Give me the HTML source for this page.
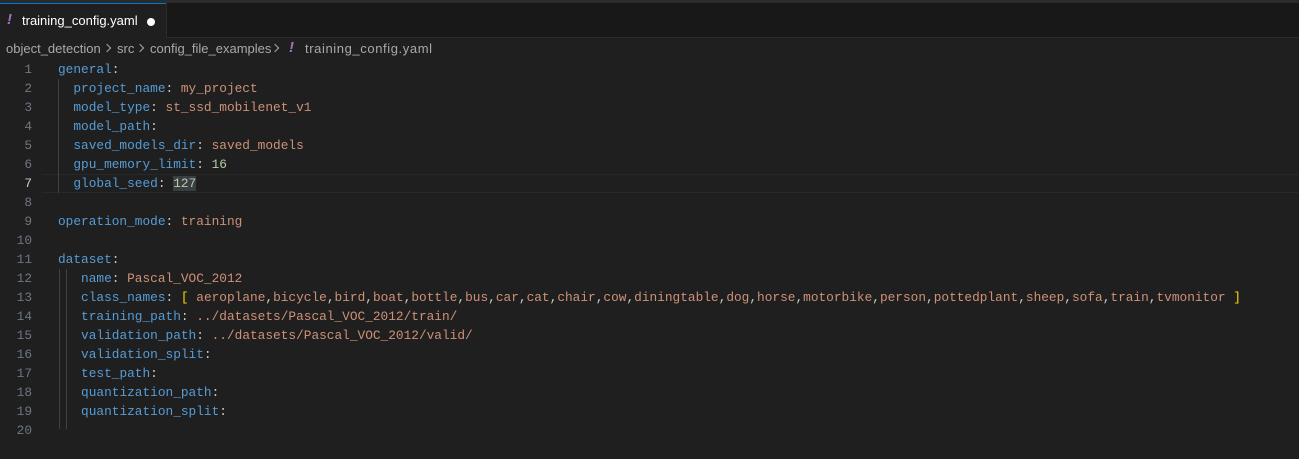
<!DOCTYPE html>
<html><head><style>
html,body{margin:0;padding:0;width:1299px;height:429px;overflow:hidden;background:#1f1f1f;}
.top{position:absolute;left:0;top:0;width:1299px;height:3px;background:#2b2b2b;}
.tabbar{position:absolute;left:0;top:3px;width:1299px;height:34px;background:#181818;border-bottom:1px solid #2b2b2b;}
.tab{position:absolute;left:0;top:3px;width:166px;height:35px;background:#1f1f1f;border-right:1px solid #2b2b2b;font:13px "Liberation Sans",sans-serif;color:#fff;}
.tab .bar{position:absolute;left:0;top:0;width:166px;height:1px;background:#0078d4;}
.tab .ex{position:absolute;left:7px;top:8px;color:#a074c4;font-style:italic;font-weight:bold;font-size:15px;}
.tab .nm{position:absolute;left:22px;top:10px;}
.tab .dot{position:absolute;left:147px;top:15px;width:8px;height:8px;border-radius:50%;background:#fff;}
.cr{position:absolute;top:41px;font:13px "Liberation Sans",sans-serif;color:#a9a9a9;white-space:pre;}
.chev{position:absolute;top:45px;width:5px;height:5px;border-top:1px solid #a9a9a9;border-right:1px solid #a9a9a9;transform:rotate(45deg);}
.code{position:absolute;left:0;top:60px;font:12.8px "Liberation Mono",monospace;line-height:19px;white-space:pre;}
.ln{position:absolute;left:0;width:32px;text-align:right;color:#6e7681;}
.tx{position:absolute;left:58px;}
.k{color:#569cd6}.s{color:#ce9178}.n{color:#b5cea8}.p{color:#cccccc}.y{color:#ffd700}
.cur{position:absolute;left:42px;top:174px;width:1257px;height:17px;border-top:1px solid #282828;border-bottom:1px solid #282828;}
.guide{position:absolute;width:1px;background:#404040;}
.sel{background:#3a3d41;}
</style></head><body>
<div class="top"></div>
<div class="tabbar"></div>
<div class="tab"><div class="bar"></div><span class="ex">!</span><span class="nm">training_config.yaml</span><div class="dot"></div></div>
<div class="cr" style="left:6px">object_detection</div>
<div class="chev" style="left:104px"></div>
<div class="cr" style="left:117px">src</div>
<div class="chev" style="left:137px"></div>
<div class="cr" style="left:150px">config_file_examples</div>
<div class="chev" style="left:272px"></div>
<div class="cr" style="left:289px;color:#a074c4;font-weight:bold;font-style:italic;font-size:15px;top:39px">!</div>
<div class="cr" style="left:305px;letter-spacing:0.6px">training_config.yaml</div>
<div class="cur"></div>
<div class="guide" style="left:58px;top:79px;height:114px"></div>
<div class="guide" style="left:59px;top:269px;height:160px"></div>
<div class="guide" style="left:66px;top:269px;height:160px"></div>
<div class="code">
<div class="ln" style="top:0">1</div><div class="tx" style="top:0"><span class="k">general</span><span class="p">:</span></div>
<div class="ln" style="top:19px">2</div><div class="tx" style="top:19px">  <span class="k">project_name</span><span class="p">: </span><span class="s">my_project</span></div>
<div class="ln" style="top:38px">3</div><div class="tx" style="top:38px">  <span class="k">model_type</span><span class="p">: </span><span class="s">st_ssd_mobilenet_v1</span></div>
<div class="ln" style="top:57px">4</div><div class="tx" style="top:57px">  <span class="k">model_path</span><span class="p">:</span></div>
<div class="ln" style="top:76px">5</div><div class="tx" style="top:76px">  <span class="k">saved_models_dir</span><span class="p">: </span><span class="s">saved_models</span></div>
<div class="ln" style="top:95px">6</div><div class="tx" style="top:95px">  <span class="k">gpu_memory_limit</span><span class="p">: </span><span class="n">16</span></div>
<div class="ln" style="top:114px;color:#ccc">7</div><div class="tx" style="top:114px">  <span class="k">global_seed</span><span class="p">: </span><span class="n sel">127</span></div>
<div class="ln" style="top:133px">8</div>
<div class="ln" style="top:152px">9</div><div class="tx" style="top:152px"><span class="k">operation_mode</span><span class="p">: </span><span class="s">training</span></div>
<div class="ln" style="top:171px">10</div>
<div class="ln" style="top:190px">11</div><div class="tx" style="top:190px"><span class="k">dataset</span><span class="p">:</span></div>
<div class="ln" style="top:209px">12</div><div class="tx" style="top:209px">   <span class="k">name</span><span class="p">: </span><span class="s">Pascal_VOC_2012</span></div>
<div class="ln" style="top:228px">13</div><div class="tx" style="top:228px">   <span class="k">class_names</span><span class="p">: </span><span class="y">[</span> <span class="s">aeroplane</span><span class="p">,</span><span class="s">bicycle</span><span class="p">,</span><span class="s">bird</span><span class="p">,</span><span class="s">boat</span><span class="p">,</span><span class="s">bottle</span><span class="p">,</span><span class="s">bus</span><span class="p">,</span><span class="s">car</span><span class="p">,</span><span class="s">cat</span><span class="p">,</span><span class="s">chair</span><span class="p">,</span><span class="s">cow</span><span class="p">,</span><span class="s">diningtable</span><span class="p">,</span><span class="s">dog</span><span class="p">,</span><span class="s">horse</span><span class="p">,</span><span class="s">motorbike</span><span class="p">,</span><span class="s">person</span><span class="p">,</span><span class="s">pottedplant</span><span class="p">,</span><span class="s">sheep</span><span class="p">,</span><span class="s">sofa</span><span class="p">,</span><span class="s">train</span><span class="p">,</span><span class="s">tvmonitor</span> <span class="y">]</span></div>
<div class="ln" style="top:247px">14</div><div class="tx" style="top:247px">   <span class="k">training_path</span><span class="p">: </span><span class="s">../datasets/Pascal_VOC_2012/train/</span></div>
<div class="ln" style="top:266px">15</div><div class="tx" style="top:266px">   <span class="k">validation_path</span><span class="p">: </span><span class="s">../datasets/Pascal_VOC_2012/valid/</span></div>
<div class="ln" style="top:285px">16</div><div class="tx" style="top:285px">   <span class="k">validation_split</span><span class="p">:</span></div>
<div class="ln" style="top:304px">17</div><div class="tx" style="top:304px">   <span class="k">test_path</span><span class="p">:</span></div>
<div class="ln" style="top:323px">18</div><div class="tx" style="top:323px">   <span class="k">quantization_path</span><span class="p">:</span></div>
<div class="ln" style="top:342px">19</div><div class="tx" style="top:342px">   <span class="k">quantization_split</span><span class="p">:</span></div>
<div class="ln" style="top:361px">20</div>
</div>
</body></html>
